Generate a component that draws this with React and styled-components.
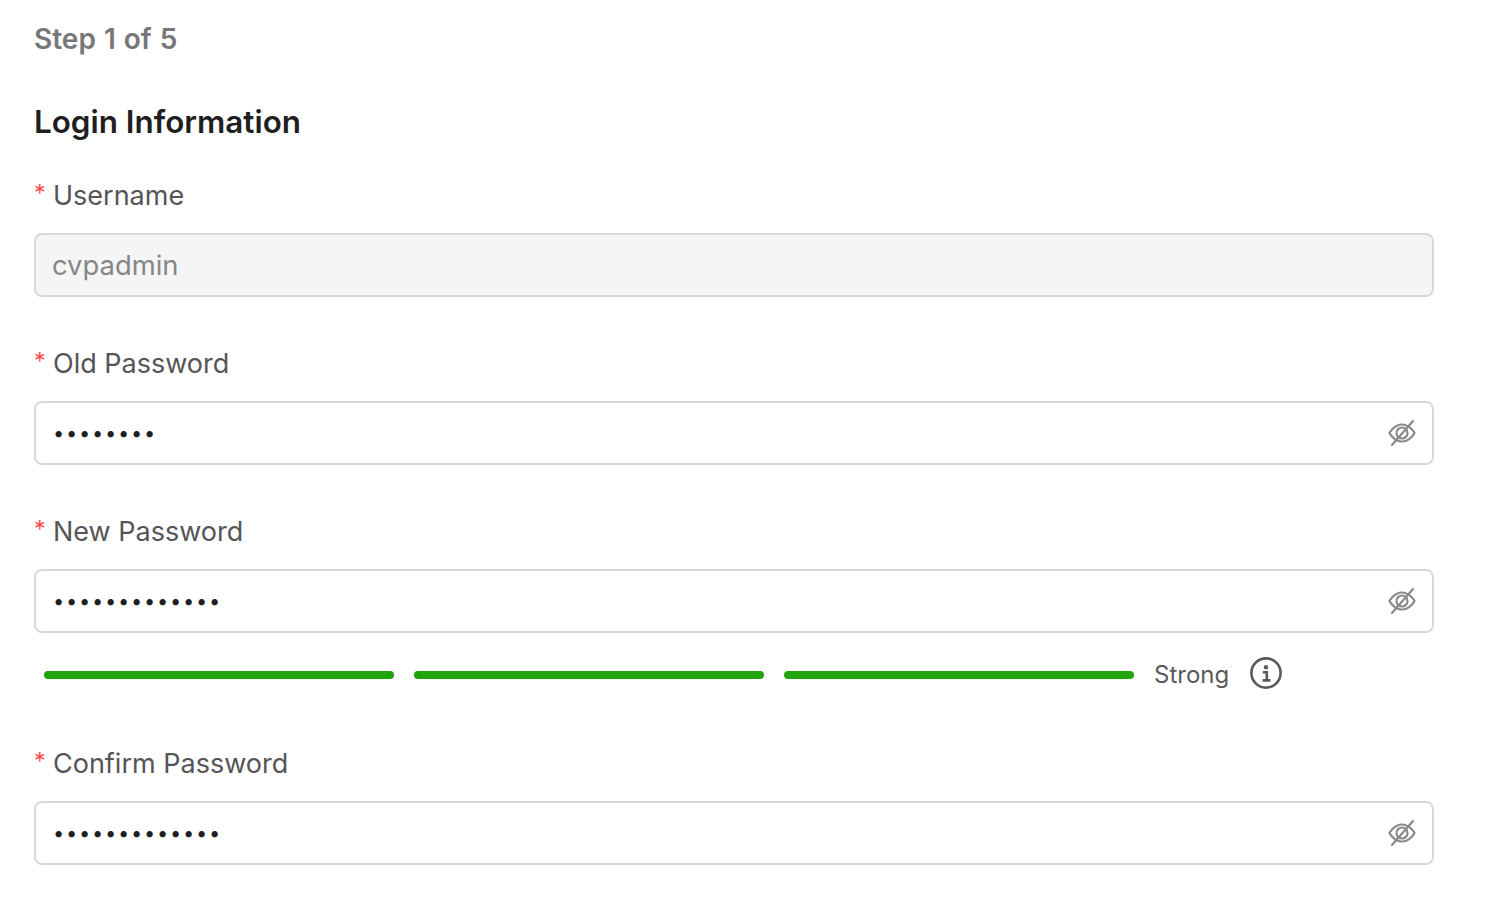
import React from "react"
import styled, { createGlobalStyle } from "styled-components"

const Global = createGlobalStyle`
  html, body {
    margin: 0;
    background: #fff;
  }
  body {
    font-family: "Inter", "Liberation Sans", sans-serif;
  }
`

const Page = styled.div`
  width: 1400px;
  padding: 18px 0 0 34px;
`

const Step = styled.div`
  font-size: 28px;
  line-height: 42px;
  font-weight: 600;
  word-spacing: 1px;
  color: #77777a;
`

const Title = styled.h2`
  margin: 40px 0 0;
  font-size: 31.4px;
  line-height: 44px;
  font-weight: 600;
  color: #1f1f1f;
`

const Field = styled.div`
  margin-top: 29px;
  margin-bottom: ${(props) => (props.$tight ? "0" : "44px")};
  & + & {
    margin-top: 0;
  }
`

const Label = styled.label`
  display: flex;
  align-items: center;
  height: 44px;
  margin-bottom: 16px;
  font-size: 27px;
  color: #555558;
`

const Star = styled.span`
  width: 19px;
  font-size: 23px;
  color: #ff4d4f;
  position: relative;
  top: -2px;
`

const InputBox = styled.div`
  display: flex;
  align-items: center;
  box-sizing: border-box;
  height: 64px;
  padding: 0 16px;
  border: 2px solid #d9d9d9;
  border-radius: 8px;
  background: ${(props) => (props.$disabled ? "#f5f5f5" : "#fff")};
`

const Input = styled.input`
  flex: 1;
  min-width: 0;
  padding: 0;
  border: 0;
  outline: 0;
  background: transparent;
  font-family: inherit;
  font-size: ${(props) => (props.type === "password" ? "20px" : "27.400px")};
  letter-spacing: ${(props) => (props.type === "password" ? "1.750px" : "0")};
  text-indent: ${(props) => (props.type === "password" ? "1px" : "0")};
  color: ${(props) => (props.disabled ? "#868688" : "#1f1f1f")};
`

const EyeButton = styled.span`
  display: flex;
  color: #8a8a8a;
`

const Strength = styled.div`
  display: flex;
  align-items: center;
  height: 32px;
  margin: 24px 0 52px;
  padding-left: 10px;
`

const Bar = styled.div`
  width: 350px;
  height: 8px;
  margin: 4px 20px 0 0;
  border-radius: 4px;
  background: #1fa50b;
`

const StrengthText = styled.span`
  margin-top: 2px;
  width: 96px;
  font-size: 24px;
  color: #595959;
`

const EyeOff = () => (
  <svg width="28" height="28" viewBox="0 0 28 28" fill="none" stroke="currentColor" strokeWidth="2.200" strokeLinecap="round">
    <path d="M1.500 14C1.500 14 6 5.500 14 5.500S26.500 14 26.500 14S22 22.500 14 22.500S1.500 14 1.500 14Z" />
    <circle cx="14" cy="14" r="5.500" />
    <path d="M25 2L4 26" />
  </svg>
)

const InfoIcon = () => (
  <svg width="32" height="32" viewBox="0 0 32 32" fill="none" stroke="#595959">
    <circle cx="16" cy="16" r="14.600" strokeWidth="2.600" />
    <circle cx="16" cy="10.300" r="2.200" fill="#595959" stroke="none" />
    <path d="M12.800 15.200H16.800V23.400M12.600 23.400H20.400" strokeWidth="2.600" />
  </svg>
)

const PasswordField = ({ label, value }) => (
  <Field>
    <Label>
      <Star>*</Star>
      {label}
    </Label>
    <InputBox>
      <Input type="password" value={value} readOnly />
      <EyeButton>
        <EyeOff />
      </EyeButton>
    </InputBox>
  </Field>
)

const App = () => (
  <Page>
    <Global />
    <Step>Step 1 of 5</Step>
    <Title>Login Information</Title>
    <Field>
      <Label>
        <Star>*</Star>
        Username
      </Label>
      <InputBox $disabled>
        <Input value="cvpadmin" disabled readOnly />
      </InputBox>
    </Field>
    <PasswordField label="Old Password" value="password" />
    <Field $tight>
      <Label>
        <Star>*</Star>
        New Password
      </Label>
      <InputBox>
        <Input type="password" value="passwordpassw" readOnly />
        <EyeButton>
          <EyeOff />
        </EyeButton>
      </InputBox>
    </Field>
    <Strength>
      <Bar />
      <Bar />
      <Bar />
      <StrengthText>Strong</StrengthText>
      <InfoIcon />
    </Strength>
    <PasswordField label="Confirm Password" value="passwordpassw" />
  </Page>
)

export default App
